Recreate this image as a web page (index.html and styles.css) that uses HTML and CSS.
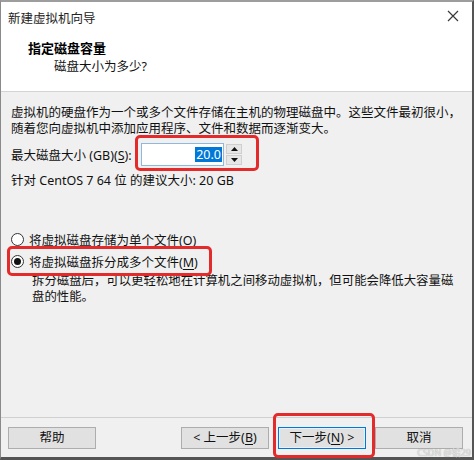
FILE: index.html
```html
<!DOCTYPE html>
<html lang="zh-CN">
<head>
<meta charset="utf-8">
<title>新建虚拟机向导</title>
<link rel="stylesheet" href="styles.css">
</head>
<body>
<div class="window">
  <div class="titlebar">
    <span class="title">新建虚拟机向导</span>
    <svg class="close" width="12" height="12" viewBox="0 0 12 12"><path d="M1 1 L11 11 M11 1 L1 11" stroke="#3a3a3a" stroke-width="1.2" fill="none"/></svg>
  </div>
  <div class="header">
    <div class="h-title">指定磁盘容量</div>
    <div class="h-sub">磁盘大小为多少?</div>
  </div>
  <div class="content">
    <p class="intro">虚拟机的硬盘作为一个或多个文件存储在主机的物理磁盘中。这些文件最初很小，<br>随着您向虚拟机中添加应用程序、文件和数据而逐渐变大。</p>
    <div class="size-row">
      <span class="label">最大磁盘大小 (GB)(<u>S</u>):</span>
      <div class="spin-wrap">
        <div class="spinbox"><span class="sel">20.0</span></div>
        <div class="spin">
          <div class="spin-btn"><svg width="7" height="4" viewBox="0 0 7 4"><path d="M0 4 L3.5 0 L7 4 Z" fill="#111"/></svg></div>
          <div class="spin-btn"><svg width="7" height="4" viewBox="0 0 7 4"><path d="M0 0 L3.5 4 L7 0 Z" fill="#111"/></svg></div>
        </div>
        <div class="mark mark-input"></div>
      </div>
    </div>
    <p class="recommend">针对 CentOS 7 64 位 的建议大小: 20 GB</p>
    <div class="radios">
      <div class="radio-row">
        <span class="radio"></span>
        <span>将虚拟磁盘存储为单个文件(O)</span>
      </div>
      <div class="radio-row">
        <span class="radio checked"></span>
        <span>将虚拟磁盘拆分成多个文件(<u>M</u>)</span>
        <div class="mark mark-radio"></div>
      </div>
      <p class="desc">拆分磁盘后，可以更轻松地在计算机之间移动虚拟机，但可能会降低大容量磁<br>盘的性能。</p>
    </div>
  </div>
  <div class="footer">
    <button class="btn">帮助</button>
    <button class="btn back">&lt; 上一步(<u>B</u>)</button>
    <div class="next-wrap">
      <button class="btn default">下一步(<u>N</u>) &gt;</button>
      <div class="mark mark-next"></div>
    </div>
    <button class="btn">取消</button>
  </div>
  <span class="watermark">CSDN @铅29</span>
</div>
</body>
</html>
```
FILE: styles.css
```css
* { box-sizing: border-box; }
html, body { margin: 0; padding: 0; }
body {
  width: 474px;
  height: 460px;
  font-family: "Noto Sans", "Noto Sans CJK SC", sans-serif;
  font-size: 12.5px;
  color: #111;
  background: #f0f0f0;
}
p { margin: 0; }
u { text-decoration: underline; text-underline-offset: 2px; }

.window {
  position: relative;
  width: 474px;
  height: 460px;
  display: flex;
  flex-direction: column;
  background: #f0f0f0;
  border-top: 2px solid #9d9d9d;
  border-left: 1px solid #8a8a8a;
  border-right: 2px solid #555;
  border-bottom: 3px solid #555;
}

.titlebar {
  height: 30px;
  background: #fff;
  display: flex;
  align-items: center;
  justify-content: space-between;
  padding: 0 13px 0 7px;
  color: #222;
}
.title { font-size: 12.5px; }
.close { display: block; margin-top: -2px; }

.header {
  height: 60px;
  background: #fff;
  border-bottom: 1px solid #d4d4d4;
  padding: 7px 0 0 27px;
}
.h-title {
  font-weight: bold;
  font-size: 13px;
  line-height: 18px;
  color: #000;
}
.h-sub {
  padding-left: 26px;
  line-height: 19px;
}

.content {
  flex: 1;
  padding: 0 10px;
}
.intro {
  margin-top: 13px;
  line-height: 16px;
}

.size-row {
  display: flex;
  align-items: center;
  margin-top: 6px;
  height: 23px;
}
.label { width: 130px; }
.spin-wrap {
  position: relative;
  display: flex;
  align-items: stretch;
  height: 23px;
}
.spinbox {
  width: 83px;
  background: #fff;
  border: 1px solid #8fb8e0;
  display: flex;
  align-items: center;
  justify-content: flex-end;
  padding-right: 1px;
}
.sel {
  background: #0078d7;
  color: #fff;
  font-size: 12.5px;
  line-height: 15px;
  padding: 0 1px;
}
.spin {
  width: 16px;
  margin-left: 2px;
  display: flex;
  flex-direction: column;
  gap: 1px;
  padding: 1px 0;
}
.spin-btn {
  flex: 1;
  background: #e6e6e6;
  border: 1px solid #cfcfcf;
  display: flex;
  align-items: center;
  justify-content: center;
}
.spin-btn svg { display: block; }

.mark {
  position: absolute;
  border: 3px solid #e42b2b;
  border-radius: 5px;
  pointer-events: none;
  z-index: 5;
}
.mark-input { top: -8px; left: -6px; right: -17px; bottom: -5px; }

.recommend {
  margin-top: 7px;
  line-height: 16px;
}

.radios { margin-top: 39px; }
.radio-row {
  position: relative;
  display: flex;
  align-items: center;
  height: 22px;
  gap: 5px;
}
.radio {
  width: 13px;
  height: 13px;
  border-radius: 50%;
  border: 1px solid #333;
  background: #fff;
  display: flex;
  align-items: center;
  justify-content: center;
}
.radio.checked::after {
  content: "";
  width: 7px;
  height: 7px;
  border-radius: 50%;
  background: #111;
}
.mark-radio { top: -4px; left: -4px; width: 205px; bottom: -4px; }

.desc {
  margin-top: 1px;
  padding-left: 21px;
  font-size: 12.4px;
  line-height: 16px;
  white-space: nowrap;
}

.footer {
  border-top: 1px solid #d0d0d0;
  display: flex;
  align-items: flex-start;
  gap: 9px;
  padding: 9px 9px 8px 7px;
  height: 40px;
}
.btn {
  width: 88px;
  height: 22px;
  font-family: inherit;
  font-size: 12.5px;
  color: #111;
  background: #e1e1e1;
  border: 1px solid #adadad;
  padding: 0;
  line-height: 18px;
}
.back { margin-left: auto; }
.btn.default {
  border: 1px solid #0078d7;
  box-shadow: inset 0 0 0 1px #e5f1fb;
}
.next-wrap { position: relative; }
.mark-next { top: -14px; left: -5px; right: -9px; bottom: -9px; }

.watermark {
  position: absolute;
  right: 1px;
  bottom: -1px;
  font-size: 9px;
  line-height: 10px;
  color: #e4e4e4;
  text-shadow: 0 0 1px #999;
  z-index: 6;
}
```
